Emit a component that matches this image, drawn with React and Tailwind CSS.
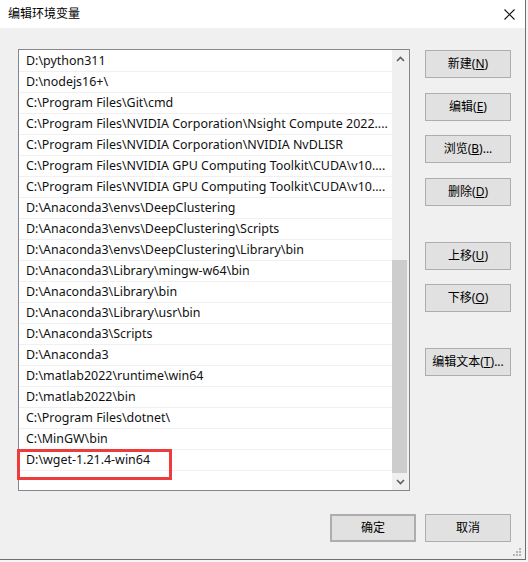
const PATHS = [
  "D:\\python311",
  "D:\\nodejs16+\\",
  "C:\\Program Files\\Git\\cmd",
  "C:\\Program Files\\NVIDIA Corporation\\Nsight Compute 2022....",
  "C:\\Program Files\\NVIDIA Corporation\\NVIDIA NvDLISR",
  "C:\\Program Files\\NVIDIA GPU Computing Toolkit\\CUDA\\v10....",
  "C:\\Program Files\\NVIDIA GPU Computing Toolkit\\CUDA\\v10....",
  "D:\\Anaconda3\\envs\\DeepClustering",
  "D:\\Anaconda3\\envs\\DeepClustering\\Scripts",
  "D:\\Anaconda3\\envs\\DeepClustering\\Library\\bin",
  "D:\\Anaconda3\\Library\\mingw-w64\\bin",
  "D:\\Anaconda3\\Library\\bin",
  "D:\\Anaconda3\\Library\\usr\\bin",
  "D:\\Anaconda3\\Scripts",
  "D:\\Anaconda3",
  "D:\\matlab2022\\runtime\\win64",
  "D:\\matlab2022\\bin",
  "C:\\Program Files\\dotnet\\",
  "C:\\MinGW\\bin",
  "D:\\wget-1.21.4-win64",
];

// side buttons with their top spacing
const ACTIONS = [
  { label: "新建", key: "N", mt: "mt-[1px]" },
  { label: "编辑", key: "E", mt: "mt-[15px]" },
  { label: "浏览", key: "B", tail: "...", mt: "mt-[14px]" },
  { label: "删除", key: "D", mt: "mt-[15px]" },
  { label: "上移", key: "U", mt: "mt-[36px]" },
  { label: "下移", key: "O", mt: "mt-[14px]" },
  { label: "编辑文本", key: "T", tail: "...", mt: "mt-[36px]" },
];

const FONT = "font-['Noto_Sans','Noto_Sans_CJK_SC',sans-serif]";

function Chevron({ down }) {
  return (
    <svg width="9" height="6" viewBox="0 0 9 6" className={down ? "rotate-180" : ""}>
      <path d="M1 5 L4.5 1.5 L8 5" fill="none" stroke="#606060" strokeWidth="1.6" />
    </svg>
  );
}

function WinButton({ children, className = "" }) {
  return (
    <button className={`w-[86px] h-[28px] bg-[#e1e1e1] border border-[#adadad] text-[12px] text-black flex items-center justify-center ${className}`}>
      {children}
    </button>
  );
}

export default function App() {
  return (
    <div className={`w-[528px] h-[562px] bg-[#f4f4f4] ${FONT}`}>
      <div className="relative w-[526px] h-[560px] flex flex-col bg-[#f0f0f0] border-r border-b border-[#6e6e6e]">
        {/* title bar */}
        <div className="h-[28px] bg-white flex items-center justify-between pl-[8px] pr-[10px]">
          <span className="text-[12px] text-black">编辑环境变量</span>
          <svg width="11" height="11" viewBox="0 0 11 11">
            <path d="M0.5 0.5 L10.5 10.5 M10.5 0.5 L0.5 10.5" stroke="#111" strokeWidth="1.1" />
          </svg>
        </div>

        <div className="flex-1 flex flex-col pt-[21px] pl-[18px]">
          <div className="flex gap-[15px]">
            {/* path list */}
            <div className="relative w-[392px] h-[442px] border border-[#828790] bg-white flex">
              <div className="flex-1 pt-[1px]">
                {PATHS.map((p, i) => (
                  <div
                    key={i}
                    className="h-[21px] border-b border-[#f0f0f0] pl-[7px] flex items-center text-[12.45px] text-[#111] whitespace-nowrap overflow-hidden"
                  >
                    {p}
                  </div>
                ))}
              </div>
              <div className="w-[17px] flex flex-col bg-[#f0f0f0]">
                <div className="h-[17px] flex items-center justify-center">
                  <Chevron />
                </div>
                <div className="flex-1 flex flex-col justify-end">
                  <div className="h-[213px] w-[15px] bg-[#cdcdcd]" />
                </div>
                <div className="h-[17px] flex items-center justify-center">
                  <Chevron down />
                </div>
              </div>
              {/* highlight around the new entry */}
              <div className="absolute left-[-2px] top-[399px] w-[155px] h-[31px] border-[3px] border-[#ee3b3b]" />
            </div>

            <div className="flex flex-col">
              {ACTIONS.map((a) => (
                <WinButton key={a.label} className={a.mt}>
                  {a.label}(<span className="underline">{a.key}</span>){a.tail}
                </WinButton>
              ))}
            </div>
          </div>

          <div className="flex justify-end gap-[9px] pr-[14px] mt-[23px]">
            <WinButton className="border-2 border-[#0078d7]">确定</WinButton>
            <WinButton>取消</WinButton>
          </div>
        </div>

        {/* resize grip */}
        <svg className="absolute right-[3px] bottom-[2px]" width="9" height="9" viewBox="0 0 9 9">
          <g fill="#b4b4b4">
            <rect x="6" y="0" width="2" height="2" />
            <rect x="3" y="3" width="2" height="2" />
            <rect x="6" y="3" width="2" height="2" />
            <rect x="0" y="6" width="2" height="2" />
            <rect x="3" y="6" width="2" height="2" />
            <rect x="6" y="6" width="2" height="2" />
          </g>
        </svg>
      </div>
    </div>
  );
}
